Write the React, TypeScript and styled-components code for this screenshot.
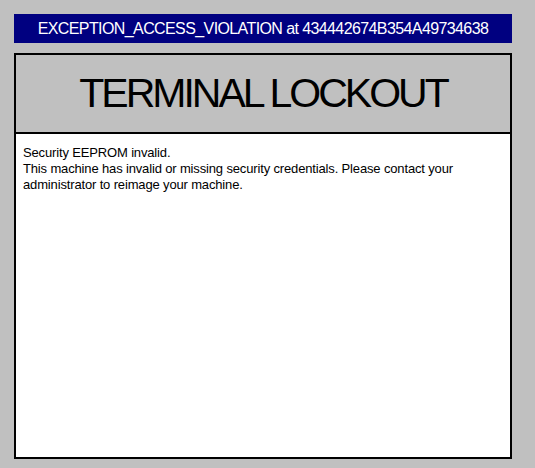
import React from "react";
import styled, {createGlobalStyle} from "styled-components";

const GlobalStyle = createGlobalStyle`
  html, body {
    margin: 0;
    padding: 0;
    background: #C0C0C0;
  }
  body {
    font-family: "Liberation Sans", Arial, sans-serif;
  }
`

const Page = styled.div`
  display: flex;
  flex-direction: column;
  gap: 10px;
  padding: 14px 23px 9px 14px;
  width: 498px;
  height: 445px;
`

const ErrorBar = styled.div`
  display: flex;
  align-items: center;
  justify-content: center;
  height: 29px;
  background-color: #000080;
  color: #FFFFFF;
  font-size: 16px;
  letter-spacing: -0.6px;
`

const Panel = styled.div`
  display: flex;
  flex-direction: column;
  flex: 1;
  border: 2px solid #000000;
  background-color: #FFFFFF;
`

const Title = styled.div`
  display: flex;
  align-items: center;
  justify-content: center;
  height: 77px;
  border-bottom: 2px solid #000000;
  background-color: #C0C0C0;
  color: #000000;
  font-size: 41px;
  letter-spacing: -3px;
`

const Message = styled.div`
  padding: 11px 7px;
  font-size: 13px;
  line-height: 16px;
  letter-spacing: -0.15px;
  color: #000000;
`

const App = () => {
    return (<>
        <GlobalStyle/>
        <Page>
            <ErrorBar>EXCEPTION_ACCESS_VIOLATION at 434442674B354A49734638</ErrorBar>
            <Panel>
                <Title>TERMINAL LOCKOUT</Title>
                <Message>
                    Security EEPROM invalid.<br/>
                    This machine has invalid or missing security credentials. Please contact your
                    administrator to reimage your machine.
                </Message>
            </Panel>
        </Page>
    </>)
}

export default App
